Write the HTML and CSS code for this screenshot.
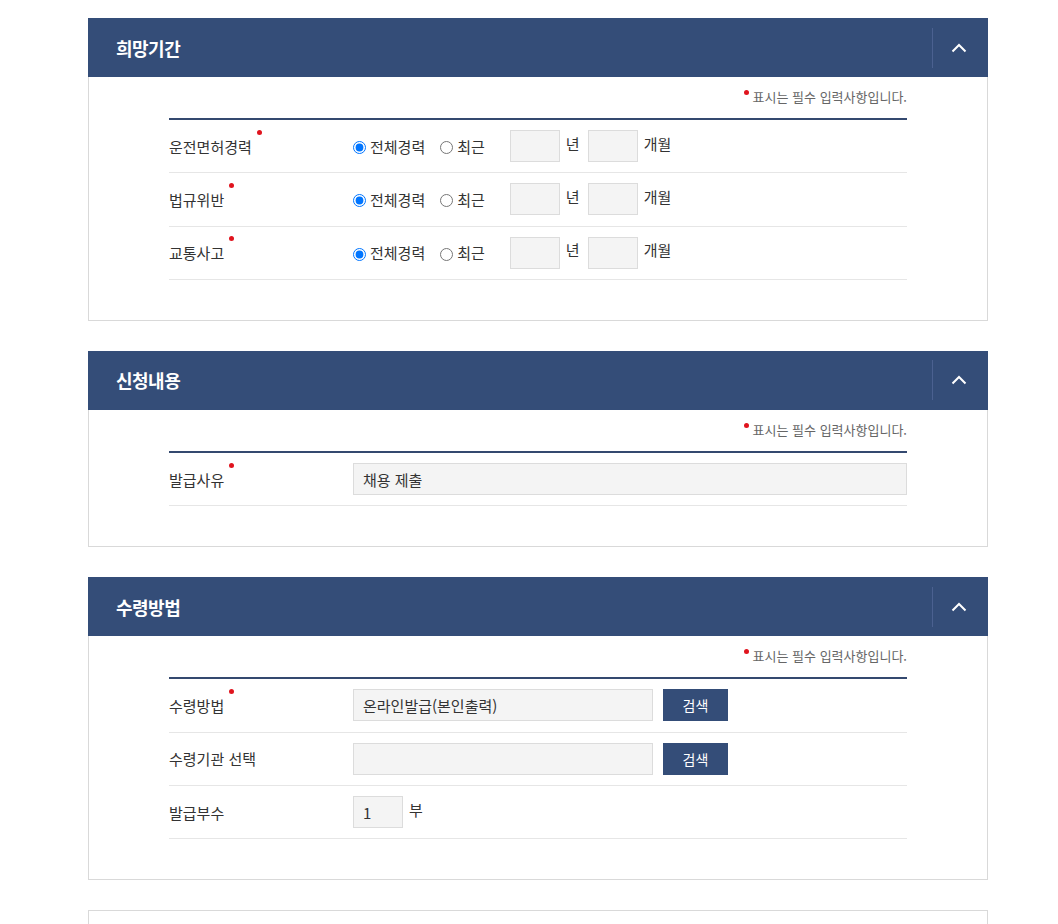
FILE: index.html
```html
<!DOCTYPE html>
<html lang="ko">
<head>
<meta charset="utf-8">
<title>신청</title>
<link rel="stylesheet" href="styles.css">
</head>
<body>
<div class="page">

  <section class="panel">
    <div class="panel-head">
      <h2 class="panel-title">희망기간</h2>
      <button class="toggle" type="button" aria-label="접기">
        <svg width="16" height="10" viewBox="0 0 16 10"><path d="M1.5 8.5 L8 2 L14.5 8.5" fill="none" stroke="#fff" stroke-width="2"/></svg>
      </button>
    </div>
    <div class="panel-body">
      <p class="note"><span class="dot"></span>표시는 필수 입력사항입니다.</p>
      <div class="form">
        <div class="row">
          <div class="label req">운전면허경력</div>
          <div class="field">
            <label class="radio"><input type="radio" name="r1" checked> 전체경력</label>
            <label class="radio"><input type="radio" name="r1"> 최근</label>
            <input class="box small first" type="text">
            <span class="unit">년</span>
            <input class="box small" type="text">
            <span class="unit">개월</span>
          </div>
        </div>
        <div class="row">
          <div class="label req">법규위반</div>
          <div class="field">
            <label class="radio"><input type="radio" name="r2" checked> 전체경력</label>
            <label class="radio"><input type="radio" name="r2"> 최근</label>
            <input class="box small first" type="text">
            <span class="unit">년</span>
            <input class="box small" type="text">
            <span class="unit">개월</span>
          </div>
        </div>
        <div class="row">
          <div class="label req">교통사고</div>
          <div class="field">
            <label class="radio"><input type="radio" name="r3" checked> 전체경력</label>
            <label class="radio"><input type="radio" name="r3"> 최근</label>
            <input class="box small first" type="text">
            <span class="unit">년</span>
            <input class="box small" type="text">
            <span class="unit">개월</span>
          </div>
        </div>
      </div>
    </div>
  </section>

  <section class="panel">
    <div class="panel-head">
      <h2 class="panel-title">신청내용</h2>
      <button class="toggle" type="button" aria-label="접기">
        <svg width="16" height="10" viewBox="0 0 16 10"><path d="M1.5 8.5 L8 2 L14.5 8.5" fill="none" stroke="#fff" stroke-width="2"/></svg>
      </button>
    </div>
    <div class="panel-body">
      <p class="note"><span class="dot"></span>표시는 필수 입력사항입니다.</p>
      <div class="form">
        <div class="row">
          <div class="label req">발급사유</div>
          <div class="field">
            <input class="box full" type="text" value="채용 제출">
          </div>
        </div>
      </div>
    </div>
  </section>

  <section class="panel">
    <div class="panel-head">
      <h2 class="panel-title">수령방법</h2>
      <button class="toggle" type="button" aria-label="접기">
        <svg width="16" height="10" viewBox="0 0 16 10"><path d="M1.5 8.5 L8 2 L14.5 8.5" fill="none" stroke="#fff" stroke-width="2"/></svg>
      </button>
    </div>
    <div class="panel-body">
      <p class="note"><span class="dot"></span>표시는 필수 입력사항입니다.</p>
      <div class="form">
        <div class="row">
          <div class="label req">수령방법</div>
          <div class="field">
            <input class="box medium" type="text" value="온라인발급(본인출력)">
            <button class="btn" type="button">검색</button>
          </div>
        </div>
        <div class="row">
          <div class="label">수령기관 선택</div>
          <div class="field">
            <input class="box medium" type="text">
            <button class="btn" type="button">검색</button>
          </div>
        </div>
        <div class="row">
          <div class="label">발급부수</div>
          <div class="field">
            <input class="box small" type="text" value="1">
            <span class="unit">부</span>
          </div>
        </div>
      </div>
    </div>
  </section>

  <section class="panel panel-next"></section>

</div>
</body>
</html>
```

FILE: styles.css
```css
* { box-sizing: border-box; }

html, body {
  margin: 0;
  padding: 0;
  background: #fff;
}

body {
  font-family: "Noto Sans CJK KR", "Noto Sans", sans-serif;
  color: #333;
}

.page {
  width: 900px;
  margin-left: 88px;
  padding-top: 18px;
}

.panel {
  margin-bottom: 30px;
}

.panel-head {
  height: 59px;
  background: #344d78;
  display: flex;
  align-items: center;
  justify-content: space-between;
}

.panel-title {
  margin: 0 0 0 28px;
  font-size: 18px;
  font-weight: 700;
  color: #fff;
  letter-spacing: -0.5px;
}

.toggle {
  width: 56px;
  height: 40px;
  border: 0;
  border-left: 1px solid #4b6190;
  background: transparent;
  padding: 0 4px 0 0;
  display: flex;
  align-items: center;
  justify-content: center;
  cursor: pointer;
}

.panel-body {
  border: 1px solid #d9d9d9;
  border-top: 0;
  padding: 10px 80px 40px;
}

.note {
  margin: 0 0 11px;
  text-align: right;
  font-size: 13px;
  line-height: 20px;
  color: #666;
  letter-spacing: 0;
}

.dot {
  display: inline-block;
  width: 5px;
  height: 5px;
  border-radius: 50%;
  background: #e0141e;
  vertical-align: top;
  margin: 3px 4px 0 0;
}

.form {
  border-top: 2px solid #34496f;
}

.row {
  display: flex;
  align-items: center;
  min-height: 53.33px;
  border-bottom: 1px solid #e6e6e6;
  padding: 10px 0;
}

.label {
  width: 184px;
  flex: none;
  font-size: 15px;
  color: #333;
  letter-spacing: 0;
}

.label.req::after {
  content: "";
  display: inline-block;
  width: 5px;
  height: 5px;
  border-radius: 50%;
  background: #e0141e;
  vertical-align: top;
  margin: -6px 0 0 5px;
}

.field {
  flex: 1;
  display: flex;
  align-items: center;
  font-size: 15px;
}

.radio {
  display: inline-flex;
  align-items: center;
  margin-right: 15px;
  font-size: 15px;
  white-space: nowrap;
}

.radio input {
  margin: 3px 4px 0 0;
  width: 13px;
  height: 13px;
}

.box {
  height: 32px;
  border: 1px solid #dcdcdc;
  background: #f4f4f4;
  font-family: inherit;
  font-size: 15px;
  color: #333;
  padding: 0 9px;
  outline: none;
}

.box.small { width: 50px; }
.box.small.first { margin-left: 10px; }
.box.medium { width: 300px; }
.box.full { width: 100%; }

.unit {
  font-size: 15px;
  margin: -6px 8px 0 6px;
}

.btn {
  width: 65px;
  height: 32px;
  margin-left: 10px;
  border: 0;
  background: #344d78;
  color: #fff;
  font-family: inherit;
  font-size: 14px;
  cursor: pointer;
}

.panel-next {
  height: 120px;
  border: 1px solid #d9d9d9;
  margin-bottom: 0;
}
```
